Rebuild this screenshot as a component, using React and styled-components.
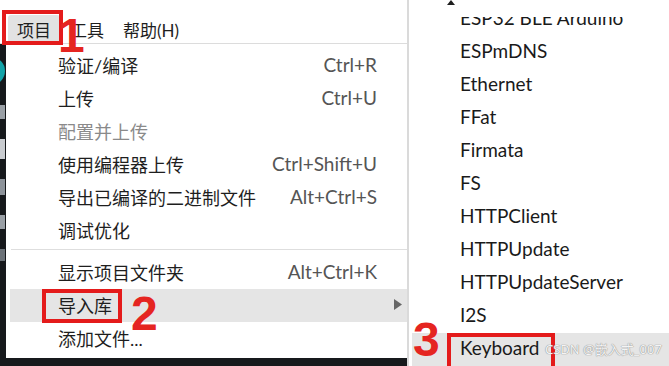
import React from 'react';
import styled, { createGlobalStyle } from 'styled-components';

const Global = createGlobalStyle`
  html, body { margin: 0; padding: 0; background: #fff; }
  body { font-family: "Lato", "Noto Sans CJK SC", sans-serif; }
`;

const Screen = styled.div`
  position: relative;
  width: 669px;
  height: 366px;
  overflow: hidden;
  display: flex;
  background: #fff;
  font-family: "Lato", "Noto Sans CJK SC", sans-serif;
`;

const LeftPane = styled.div`
  width: 407px;
  flex: none;
  display: flex;
  flex-direction: column;
  border-right: 2px solid #dadada;
`;

const MenuBar = styled.div`
  height: 44px;
  box-sizing: border-box;
  padding: 15px 0 0 8px;
  display: flex;
  gap: 1px;
  align-items: flex-start;
  border-bottom: 1px solid #dcdcdc;
  background: #fff;
`;

const BarItem = styled.div`
  height: 28px;
  box-sizing: border-box;
  padding: 3px 9px 0;
  line-height: 25px;
  font-size: 17px;
  color: #1e1e1e;
  background: ${(p) => (p.$active ? '#e2e2e2' : 'transparent')};
  border-radius: 3px 3px 0 0;
`;

const Body = styled.div`
  flex: 1;
  display: flex;
  background: #16191c;
`;

const Strip = styled.div`
  width: 6px;
  flex: none;
  overflow: hidden;
  display: flex;
  flex-direction: column;
  padding-top: 13px;
  gap: 20px;
`;

const TealDot = styled.div`
  width: 28px;
  height: 28px;
  border-radius: 50%;
  background: #13a3a8;
  margin-left: -23px;
  flex: none;
`;

const StripMark = styled.div`
  width: 5px;
  height: ${(p) => p.$h}px;
  background: ${(p) => p.$c};
  flex: none;
`;

const Menu = styled.div`
  flex: 1;
  align-self: flex-start;
  height: 314px;
  box-sizing: border-box;
  background: #fff;
  padding: 5px 0 3px;
  display: flex;
  flex-direction: column;
`;

const Row = styled.div`
  height: 33px;
  flex: none;
  box-sizing: border-box;
  display: flex;
  align-items: center;
  margin-left: 4px;
  padding: 0 ${(p) => (p.$sub ? 5 : 30)}px 2px 48px;
  font-size: 18px;
  color: ${(p) => (p.$disabled ? '#8a8a8a' : '#1e1e1e')};
  background: ${(p) => (p.$hl ? '#e5e5e5' : 'transparent')};
  white-space: nowrap;
`;

const Shortcut = styled.span`
  margin-left: auto;
  font-size: 19px;
  color: #555;
`;

const SubArrow = styled.svg`
  margin-left: auto;
  width: 8px;
  height: 11px;
`;

const Separator = styled.div`
  height: 1px;
  flex: none;
  background: #dedede;
  margin: 2px 0 6px 5px;
`;

const RightPane = styled.div`
  flex: 1;
  display: flex;
  flex-direction: column;
  background: #fff;
`;

const ScrollUp = styled.div`
  height: 17px;
  flex: none;
  display: flex;
  align-items: flex-start;
  padding-left: 38px;
`;

const UpTriangle = styled.div`
  width: 0;
  height: 0;
  border-left: 4px solid transparent;
  border-right: 4px solid transparent;
  border-bottom: 5px solid #1e1e1e;
`;

const Viewport = styled.div`
  flex: 1;
  overflow: hidden;
`;

const LibList = styled.div`
  margin-top: -14px;
  display: flex;
  flex-direction: column;
`;

const LibRow = styled.div`
  height: 33px;
  flex: none;
  box-sizing: border-box;
  display: flex;
  align-items: center;
  margin-left: 3px;
  padding: 0 0 4px 48px;
  font-size: 19px;
  color: #1a1a1a;
  background: ${(p) => (p.$hl ? '#e5e5e5' : 'transparent')};
  white-space: nowrap;
`;

const RedBox = styled.div`
  position: absolute;
  left: ${(p) => p.$x}px;
  top: ${(p) => p.$y}px;
  width: ${(p) => p.$w}px;
  height: ${(p) => p.$h}px;
  box-sizing: border-box;
  border: 4px solid #e41b1b;
  pointer-events: none;
`;

const Digit = styled.div`
  position: absolute;
  left: ${(p) => p.$x}px;
  top: ${(p) => p.$y}px;
  font-family: "Liberation Sans", Arial, sans-serif;
  font-weight: 700;
  font-size: 48px;
  line-height: 1;
  color: #e52521;
`;

const Watermark = styled.div`
  position: absolute;
  left: 545px;
  top: 340px;
  font-size: 13px;
  line-height: 18px;
  color: #f4f4f4;
  text-shadow: 0 0 1px #8e8e8e, 0 0 1px #8e8e8e;
  font-family: "Noto Sans", "Noto Sans CJK SC", sans-serif;
`;

const menuTop = [
  { label: '验证/编译', key: 'Ctrl+R' },
  { label: '上传', key: 'Ctrl+U' },
  { label: '配置并上传', disabled: true },
  { label: '使用编程器上传', key: 'Ctrl+Shift+U' },
  { label: '导出已编译的二进制文件', key: 'Alt+Ctrl+S' },
  { label: '调试优化' },
];

const libs = [
  'ESP32 BLE Arduino',
  'ESPmDNS',
  'Ethernet',
  'FFat',
  'Firmata',
  'FS',
  'HTTPClient',
  'HTTPUpdate',
  'HTTPUpdateServer',
  'I2S',
  'Keyboard',
];

export default function App() {
  return (
    <>
      <Global />
      <Screen>
        <LeftPane>
          <MenuBar>
            <BarItem $active>项目</BarItem>
            <BarItem>工具</BarItem>
            <BarItem>帮助(H)</BarItem>
          </MenuBar>
          <Body>
            <Strip>
              <TealDot />
              <StripMark $h={14} $c="#9aa0a6" />
              <StripMark $h={20} $c="#c9ccd0" />
              <StripMark $h={16} $c="#8d939a" />
              <StripMark $h={14} $c="#9aa0a6" />
              <StripMark $h={12} $c="#6c7278" />
            </Strip>
            <Menu>
              {menuTop.map((m) => (
                <Row key={m.label} $disabled={m.disabled}>
                  {m.label}
                  {m.key && <Shortcut>{m.key}</Shortcut>}
                </Row>
              ))}
              <Separator />
              <Row>
                显示项目文件夹<Shortcut>Alt+Ctrl+K</Shortcut>
              </Row>
              <Row $hl $sub>
                导入库
                <SubArrow viewBox="0 0 8 11">
                  <path d="M0 0 L8 5.5 L0 11 Z" fill="#666" />
                </SubArrow>
              </Row>
              <Row>添加文件...</Row>
            </Menu>
          </Body>
        </LeftPane>
        <RightPane>
          <ScrollUp>
            <UpTriangle />
          </ScrollUp>
          <Viewport>
            <LibList>
              {libs.map((l) => (
                <LibRow key={l} $hl={l === 'Keyboard'}>
                  {l}
                </LibRow>
              ))}
            </LibList>
          </Viewport>
        </RightPane>

        <RedBox $x={2} $y={10} $w={61} $h={35} />
        <Digit $x={58} $y={12}>1</Digit>
        <RedBox $x={42} $y={289} $w={80} $h={34} />
        <Digit $x={131} $y={290}>2</Digit>
        <RedBox $x={447} $y={333} $w={108} $h={40} />
        <Digit $x={413} $y={316}>3</Digit>
        <Watermark>CSDN @嵌入式_007</Watermark>
      </Screen>
    </>
  );
}
